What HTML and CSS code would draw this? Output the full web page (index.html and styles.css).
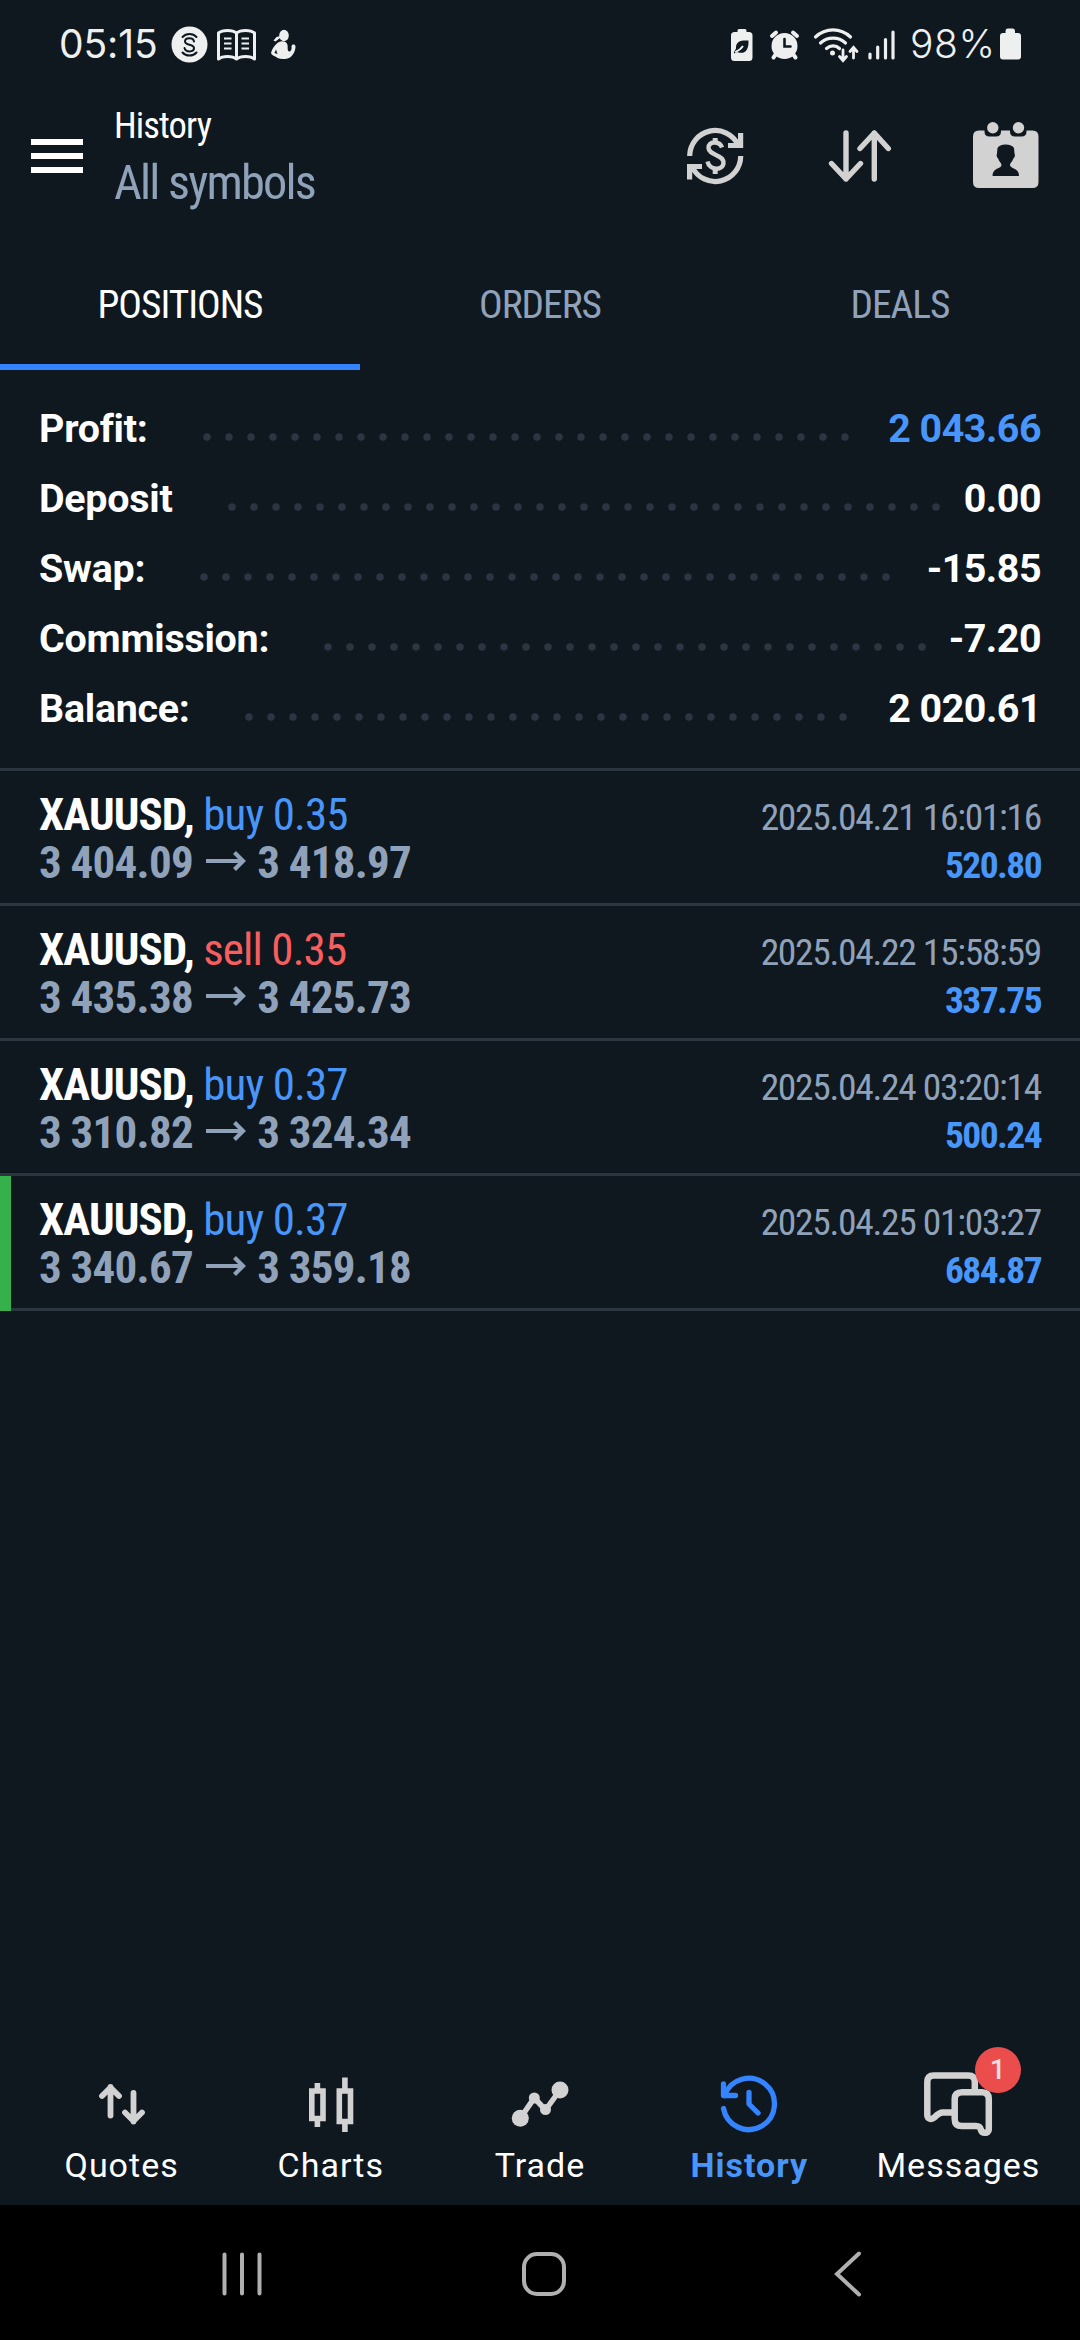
FILE: index.html
```
<!DOCTYPE html>
<html lang="en">
  <head>
    <meta charset="utf-8">
    <meta name="viewport" content="width=device-width,initial-scale=1.0">
    <title>History</title>
    <link rel="stylesheet" href="styles.css">
  </head>
  <body>
    <div class="status-bar">
      <span class="clock">05:15</span>
      <svg width="130" height="46" viewBox="168 20 130 46">
        <circle cx="189.5" cy="43.5" r="18"/>
        <g fill="none" stroke="#0f171f" stroke-width="2" stroke-linecap="round">
          <path d="M194 40.5c-.5-4.500-9-4.500-9 0 0 4 9 2.500 9 6.500 0 4.500-8.500 4.500-9.500 0"/>
          <path d="M182.500 36c3.500-4 10.500-4 14 0M182.500 51.500c3.500 4 10.500 4 14 0"/>
        </g>
        <g fill="none" stroke="#eef0f0" stroke-width="3" stroke-linejoin="round">
          <path d="M236.500 32c-4-3.500-14-3.500-18 0v26c4-3.500 14-3.500 18 0 4-3.500 14-3.500 18 0V32c-4-3.500-14-3.500-18 0z"/>
          <path d="M236.500 32v25"/>
          <path stroke-width="1.8" d="M224 37.500h7.500M224 42.500h7.500M224 47.500h7.500M241.500 37.500h7.500M241.500 42.500h7.500M241.500 47.500h7.500"/>
        </g>
        <ellipse cx="284" cy="34.5" rx="4.8" ry="5.8"/>
        <path d="M280 37l-4.500 3.500-2-1 3-3.500 4-1z"/>
        <path d="M278 41.500c4-2.500 9-1.500 9.500 2.500.5 3-.5 5 1.500 6.500 2 0 3-2 2.500-5.500 0-2 4-2.500 4 .5 0 5-3 9-5.500 11-4 2-9 2-12.500.5-2-2-6-2.500-6.500-5 1-4 3.500-8 7-10.500z"/>
        <path d="M276 48.500l1.500 4.500-3-1z" fill="#0f171f"/>
      </svg>
      <span class="spacer"></span>
      <svg width="170" height="46" viewBox="728 20 170 46">
        <path d="M737.500 31v-1.500q0-1.500 1.500-1.500h6q1.500 0 1.500 1.500V31h2.500q3.500 0 3.500 3.500v22q0 3.500-3.500 3.500h-14.500q-3.500 0-3.500-3.500v-22q0-3.500 3.500-3.500z"/>
        <path d="M748.500 39.500c-7-.5-13 .5-12.500 8l-2 3.500v1.500l3-1.500c8 3 12-2 11.500-11.500z" fill="#0f171f"/>
        <path d="M735 51c3-1 6-3 8-6" fill="none" stroke="#eef0f0" stroke-width="1.8"/>
        <circle cx="784.5" cy="45" r="13"/>
        <g fill="none" stroke="#eef0f0" stroke-linecap="round">
          <path stroke-width="4" d="M772 35l4-3.500M797 35l-4-3.500M776 53l-2.500 3.500M793 53l2.500 3.500"/>
          <path stroke="#0f171f" stroke-width="2.6" d="M784.500 38v7.500h6"/>
          <path stroke-width="3.2" d="M815.500 36c10-9.500 25-9.500 35 0M820.500 42c7-6.500 18-6.500 25 0M826.500 47.500c4-3.500 9.500-3.500 13 0"/>
          <path stroke-width="2.8" d="M843 49v10M839.500 55.500l3.500 4 3.500-4M853.500 57V47M850 50.500l3.500-4 3.500 4"/>
          <path stroke-width="3.2" d="M870 53v4M877.700 46v11M885.500 38.500V57M893 31v26"/>
        </g>
        <circle cx="832.5" cy="52" r="2.5"/>
      </svg>
      <span class="percent">98%</span>
      <svg width="22" height="46" viewBox="1000 20 22 46">
        <path d="M1005.500 32v-2q0-2.500 2-2.500h5.500q2 0 2 2.500v2h3q3 0 3 3v20.500q0 3-3 3h-15q-3 0-3-3V35q0-3 3-3z"/>
      </svg>
    </div>

    <header class="app-bar">
      <button class="menu-btn" type="button" aria-label="Menu"><i></i><i></i><i></i></button>
      <div class="title">
        <h1>History</h1>
        <p>All symbols</p>
      </div>
      <div class="actions">
        <svg width="62" height="66" viewBox="685 123 62 66" fill="none" stroke="#d2d2d2" stroke-width="5.2">
          <path d="M689.700 156a25.500 25.500 0 0 1 48.500-11"/>
          <path d="M740.700 156a25.500 25.500 0 0 1-48.500 11"/>
          <path d="M740.600 133v12.500H728M689.600 179.500V166.500H702"/>
          <path stroke-width="4.4" d="M722 147.500c-2.500-7-14-6.500-13.500.5.500 7.500 15 6.500 15 14.500 0 8.500-14 8.500-16-1"/>
          <path stroke-width="5" d="M715.200 138v5M715.200 168v6"/>
        </svg>
        <svg width="66" height="66" viewBox="828 123 66 66" fill="none" stroke="#d2d2d2" stroke-width="5.4" stroke-linecap="round" stroke-linejoin="round">
          <path d="M847 133v46M832.500 163.500L847 179l14.500-15.500"/>
          <path d="M875.300 179v-46M861 148.500l14.300-15.500 14 15.500"/>
        </svg>
        <svg width="66" height="66" viewBox="973 123 66 66" fill="#d2d2d2" overflow="visible">
          <path d="M979 130.500h5.500v1q0 5 5 5h6.500q5 0 5-5v-1h9v1q0 5 5 5h6.500q5 0 5-5v-1h6q6 0 6 6v45.500q0 6-6 6H979q-6 0-6-6v-45.500q0-6 6-6z"/>
          <circle cx="992.8" cy="127.7" r="5.7"/>
          <circle cx="1018.5" cy="127.7" r="5.7"/>
          <path fill="#0f171f" d="M997.500 148q2-3.500 8-3.500 6.500 0 8.500 3.500l.5 5.500c1 2 0 4.500-1.200 5-1 3.500-3.300 4.500-3.300 6.500 0 4 9 2.500 9 11h-26.500c0-8.500 9-7 9-11 0-2-2.300-3-3.300-6.500-1.200-.5-2-3-1.200-5z"/>
        </svg>
      </div>
    </header>

    <nav class="tabs">
      <a class="tab active">POSITIONS</a>
      <a class="tab">ORDERS</a>
      <a class="tab">DEALS</a>
    </nav>

    <section class="summary">
      <div class="line"><b>Profit:</b><svg class="dots"><line x1="0" y1="4" x2="100%" y2="4"/></svg><b class="blue">2 043.66</b></div>
      <div class="line"><b>Deposit</b><svg class="dots"><line x1="0" y1="4" x2="100%" y2="4"/></svg><b>0.00</b></div>
      <div class="line"><b>Swap:</b><svg class="dots"><line x1="0" y1="4" x2="100%" y2="4"/></svg><b>-15.85</b></div>
      <div class="line"><b>Commission:</b><svg class="dots"><line x1="0" y1="4" x2="100%" y2="4"/></svg><b>-7.20</b></div>
      <div class="line"><b>Balance:</b><svg class="dots"><line x1="0" y1="4" x2="100%" y2="4"/></svg><b>2 020.61</b></div>
    </section>

    <main class="deals">
      <div class="deal">
        <div class="left">
          <div class="symbol"><b>XAUUSD,</b> <span class="blue">buy 0.35</span></div>
          <div class="prices">3 404.09 <svg class="arrow" viewBox="0 0 40 20"><path d="M0 10h37M28.500 1.500L37 10l-8.500 8.500"/></svg> 3 418.97</div>
        </div>
        <div class="right">
          <div class="time">2025.04.21 16:01:16</div>
          <div class="profit">520.80</div>
        </div>
      </div>
      <div class="deal">
        <div class="left">
          <div class="symbol"><b>XAUUSD,</b> <span class="red">sell 0.35</span></div>
          <div class="prices">3 435.38 <svg class="arrow" viewBox="0 0 40 20"><path d="M0 10h37M28.500 1.500L37 10l-8.500 8.500"/></svg> 3 425.73</div>
        </div>
        <div class="right">
          <div class="time">2025.04.22 15:58:59</div>
          <div class="profit">337.75</div>
        </div>
      </div>
      <div class="deal">
        <div class="left">
          <div class="symbol"><b>XAUUSD,</b> <span class="blue">buy 0.37</span></div>
          <div class="prices">3 310.82 <svg class="arrow" viewBox="0 0 40 20"><path d="M0 10h37M28.500 1.500L37 10l-8.500 8.500"/></svg> 3 324.34</div>
        </div>
        <div class="right">
          <div class="time">2025.04.24 03:20:14</div>
          <div class="profit">500.24</div>
        </div>
      </div>
      <div class="deal take-profit">
        <div class="left">
          <div class="symbol"><b>XAUUSD,</b> <span class="blue">buy 0.37</span></div>
          <div class="prices">3 340.67 <svg class="arrow" viewBox="0 0 40 20"><path d="M0 10h37M28.500 1.500L37 10l-8.500 8.500"/></svg> 3 359.18</div>
        </div>
        <div class="right">
          <div class="time">2025.04.25 01:03:27</div>
          <div class="profit">684.87</div>
        </div>
      </div>
    </main>

    <nav class="bottom-nav">
      <a class="item">
        <svg viewBox="86 2068 72 72" stroke-width="5.8" stroke-linecap="round" stroke-linejoin="round">
          <path d="M110.500 2115.500V2087M102 2096l8.500-8.500 8.500 8.500"/>
          <path d="M133.500 2093v28.500M125 2112.500l8.500 8.500 8.500-8.500"/>
        </svg>
        Quotes
      </a>
      <a class="item">
        <svg viewBox="295 2068 72 72" stroke-width="5.6">
          <path d="M311.800 2091h11.200v27.500h-11.200zM317.400 2083v6M317.400 2120v7"/>
          <path d="M339.300 2091h11.200v30.500h-11.200zM344.900 2077.500v12M344.900 2123v9"/>
        </svg>
        Charts
      </a>
      <a class="item">
        <svg viewBox="504 2068 72 72" stroke-width="5.5">
          <path d="M520.300 2118.300l14-20.300 11.200 12 14.500-20"/>
          <g fill="#d2d2d2" stroke="none">
            <circle cx="520.3" cy="2118.3" r="8.5"/>
            <circle cx="534.3" cy="2098" r="5.5"/>
            <circle cx="545.5" cy="2109.5" r="5.5"/>
            <circle cx="560" cy="2090" r="8.5"/>
          </g>
        </svg>
        Trade
      </a>
      <a class="item active">
        <svg viewBox="713 2068 72 72" stroke-width="5.3" stroke-linecap="round" stroke-linejoin="round">
          <path d="M723.500 2108.500a25.700 25.700 0 1 0 1-13"/>
          <path d="M723.500 2084v11.500h12"/>
          <path d="M749 2092.500v11.500l9 9"/>
        </svg>
        History
      </a>
      <a class="item">
        <svg viewBox="922 2068 72 72" stroke-width="6.5" stroke-linejoin="round">
          <path d="M974.800 2092v-10q0-6.500-6.500-6.500h-34.500q-6.500 0-6.500 6.500v33c0 4 4 5 7 2.500 3-3 5-5 8.500-5h12"/>
          <path d="M962 2092.300h20q6.800 0 6.800 6.800v30.500c0 4-6.800 4.500-8 0-.5-2.600-1.800-3.600-5-3.600h-14q-7.100 0-7.100-7.100v-19.800q0-6.800 7.300-6.800z"/>
        </svg>
        Messages
        <span class="badge">1</span>
      </a>
    </nav>

    <div class="system-nav">
      <svg viewBox="0 0 60 60"><path d="M12.500 10.500v39M30 10.500v39M47.500 10.500v39"/></svg>
      <svg viewBox="0 0 60 60"><rect x="10" y="10" width="40" height="40" rx="13"/></svg>
      <svg viewBox="0 0 60 60"><path d="M43 9.500L21 30 43 50.500"/></svg>
    </div>
  </body>
</html>
```
FILE: styles.css
```
body {
  margin: 0;
  height: 2340px;
  display: flex;
  flex-direction: column;
  background: #0f171f;
  color: #fff;
  font-family: "Roboto Condensed", Roboto, sans-serif;
  font-size: 39.4px;
}

.blue { color: #4896fa; }
.red { color: #f85e5e; }

/* Status bar */
.status-bar {
  display: flex;
  align-items: center;
  height: 87px;
  padding: 0 58px 0 59px;
  box-sizing: border-box;
  color: #eef0f0;
  fill: #eef0f0;
  font-family: Inter, sans-serif;
}
.clock { width: 109px; font-size: 39px; letter-spacing: -0.1px; white-space: nowrap; }
.percent { width: 90px; margin-left: 12px; font-size: 39px; font-weight: 300; letter-spacing: 0.6px; white-space: nowrap; }
.spacer { flex: 1; }

/* App bar */
.app-bar {
  display: flex;
  align-items: center;
  height: 138px;
  padding: 0 41px 0 31px;
  margin-bottom: 20px;
}
.menu-btn { display: flex; flex-direction: column; gap: 8px; width: 52px; padding: 0; border: none; background: none; }
.menu-btn i { height: 6px; background: #fff; }
.title { flex: 1; margin-left: 31px; }
.title h1 { margin: 0; font-size: 36.6px; font-weight: 400; line-height: 53px; letter-spacing: -0.9px; }
.title p { margin: 0; font-size: 48.3px; line-height: 61.6px; letter-spacing: -1.8px; color: #8fa2b9; }
.actions { display: flex; align-items: center; gap: 80px; }

/* Tabs */
.tabs { display: flex; height: 125px; }
.tab { flex: 1; border-bottom: 6px solid transparent; line-height: 119px; text-align: center; letter-spacing: -1px; color: #8fa2b9; }
.tab.active { color: #fff; border-color: #3483ff; }

/* Summary */
.summary { padding: 24px 39px; font-family: Roboto, sans-serif; }
.line { display: flex; line-height: 70px; }
.line b { font-weight: 700; letter-spacing: -0.25px; white-space: nowrap; }
.line b:last-child { letter-spacing: -0.5px; }
.dots { flex: 1; min-width: 0; height: 8px; margin: 39px 25px 0 59px; overflow: visible; }
.dots line { stroke: #2b3642; stroke-width: 7.5; stroke-linecap: round; stroke-dasharray: 0 22; }

/* Deals */
.deals { flex: 1; border-top: 3px solid #2b3642; }
.deal {
  position: relative;
  display: flex;
  justify-content: space-between;
  height: 132px;
  padding: 0 39px;
  border-bottom: 3px solid #2b3642;
  line-height: 48px;
}
.left { padding-top: 20px; font-size: 45px; }
.right { padding-top: 22px; font-size: 37.5px; text-align: right; }
.symbol { letter-spacing: -0.9px; }
.prices { font-weight: 700; letter-spacing: -0.75px; color: #8fa2b9; }
.arrow { width: 40px; height: 20px; margin: 0 2px 0 3px; vertical-align: 7px; overflow: visible; fill: none; stroke: #8fa2b9; stroke-width: 4.2; }
.time { letter-spacing: -1.3px; color: #8fa2b9; }
.profit { font-weight: 700; letter-spacing: -1.6px; color: #4896fa; }
.take-profit::before {
  content: "";
  position: absolute;
  top: 0;
  bottom: -3px;
  left: 0;
  width: 11px;
  background: #36b04a;
}

/* Bottom navigation */
.bottom-nav { display: flex; padding: 0 17px 20px; font-family: Roboto, sans-serif; font-size: 34px; line-height: 40px; letter-spacing: 1px; }
.item { position: relative; flex: 1 0 0; display: flex; flex-direction: column; align-items: center; gap: 5px; stroke: #d2d2d2; }
.item svg { width: 72px; height: 72px; fill: none; overflow: visible; }
.item.active { color: #4896fa; font-weight: 700; stroke: #3483ff; }
.badge {
  position: absolute;
  top: -21px;
  left: 121px;
  width: 46px;
  height: 46px;
  border-radius: 50%;
  background: #eb4d4d;
  color: #f8dede;
  font-size: 28px;
  font-weight: 500;
  line-height: 46px;
  text-align: center;
  letter-spacing: 0;
}

/* Android navigation */
.system-nav { display: flex; align-items: center; gap: 242px; height: 135px; padding: 2px 0 0 212px; box-sizing: border-box; background: #000; fill: none; stroke: #b0b0b0; stroke-width: 4; stroke-linecap: round; }
.system-nav svg { width: 60px; height: 60px; }
```
